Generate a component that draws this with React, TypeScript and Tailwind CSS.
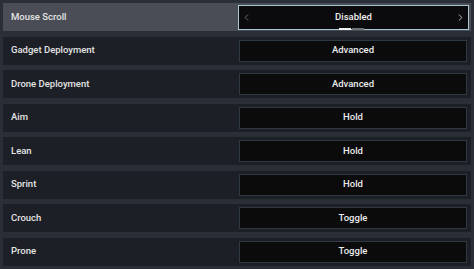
import { ChevronLeft, ChevronRight } from 'lucide-react';

const rows = [
  { label: 'Mouse Scroll', value: 'Disabled' },
  { label: 'Gadget Deployment', value: 'Advanced' },
  { label: 'Drone Deployment', value: 'Advanced' },
  { label: 'Aim', value: 'Hold' },
  { label: 'Lean', value: 'Hold' },
  { label: 'Sprint', value: 'Hold' },
  { label: 'Crouch', value: 'Toggle' },
  { label: 'Prone', value: 'Toggle' },
];

const font = { fontFamily: 'Roboto, "Liberation Sans", Arial, sans-serif' };

export default function App() {
  return (
    <div className="w-[474px] h-[269px] overflow-hidden bg-[#2a2e37] px-[3px] pt-[3px] flex flex-col gap-[5.5px]" style={font}>
      {rows.map((row, i) =>
        i === 0 ? (
          <div key={row.label} className="h-[28px] shrink-0 flex items-center bg-[#4a4d55] pl-[8px] pr-[2px]">
            <span className="flex-1 text-[9.5px] font-medium text-[#e4e4e4]">{row.label}</span>
            <div className="relative w-[231px] h-[25px] border-[1.5px] border-[#a8c6cf] bg-[#0b0b0d] flex items-center justify-between px-[2px]">
              <ChevronLeft size={11} strokeWidth={2} className="text-[#6c6f75]" />
              <span className="text-[9.5px] font-medium text-[#f0f0f0]">{row.value}</span>
              <ChevronRight size={11} strokeWidth={2} className="text-[#c9cacc]" />
              <div className="absolute left-[100px] bottom-[-1px] flex gap-[1px]">
                <div className="w-[12px] h-[2px] bg-[#f2f2f2]" />
                <div className="w-[12px] h-[2px] bg-[#6f737a]" />
              </div>
            </div>
          </div>
        ) : (
          <div key={row.label} className="h-[28px] shrink-0 flex items-center bg-[#1c1f26] pl-[8px] pr-[4px]">
            <span className="flex-1 text-[9.5px] font-medium text-[#e4e4e4]">{row.label}</span>
            <div className="w-[228px] h-[22px] border border-[#2f3944] bg-[#0b0b0c] flex items-center justify-center">
              <span className="text-[9.5px] font-medium text-[#ececec]">{row.value}</span>
            </div>
          </div>
        )
      )}
    </div>
  );
}
